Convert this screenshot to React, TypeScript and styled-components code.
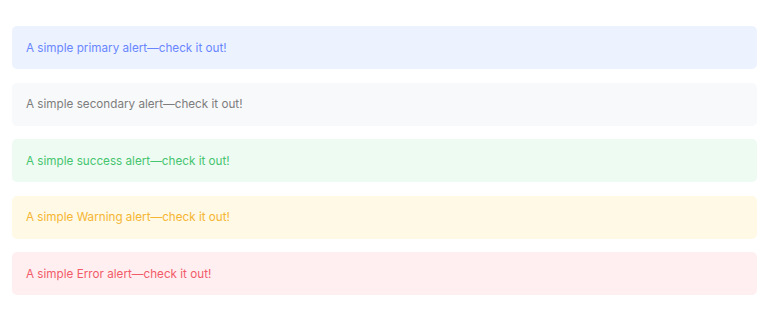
import styled, { createGlobalStyle } from 'styled-components';

type Variant = 'primary' | 'secondary' | 'success' | 'warning' | 'error';

const palette: Record<Variant, { bg: string; fg: string }> = {
    primary: { bg: '#ecf3ff', fg: '#6a86ff' },
    secondary: { bg: '#f8f9fb', fg: '#7d7d7d' },
    success: { bg: '#eefbf2', fg: '#45c56f' },
    warning: { bg: '#fff9e5', fg: '#f5b633' },
    error: { bg: '#ffeff0', fg: '#f25b6a' },
};

const alerts: { variant: Variant; text: string }[] = [
    { variant: 'primary', text: 'A simple primary alert—check it out!' },
    { variant: 'secondary', text: 'A simple secondary alert—check it out!' },
    { variant: 'success', text: 'A simple success alert—check it out!' },
    { variant: 'warning', text: 'A simple Warning alert—check it out!' },
    { variant: 'error', text: 'A simple Error alert—check it out!' },
];

const GlobalStyle = createGlobalStyle`
    body {
        margin: 0;
        background: #fff;
        font-family: Inter, "Noto Sans", sans-serif;
    }
`;

const Page = styled.div`
    display: flex;
    flex-direction: column;
    gap: 13.5px;
    padding: 26px 11px 0 12px;
`;

const Alert = styled.div<{ $variant: Variant }>`
    height: 43px;
    display: flex;
    align-items: center;
    padding: 0 14px;
    border-radius: 5px;
    background: ${p => palette[p.$variant].bg};
    color: ${p => palette[p.$variant].fg};
    font-size: 11.7px;
`;

export default function App() {
    return (
        <>
            <GlobalStyle />
            <Page>
                {alerts.map(a => (
                    <Alert key={a.variant} $variant={a.variant}>{a.text}</Alert>
                ))}
            </Page>
        </>
    );
}
